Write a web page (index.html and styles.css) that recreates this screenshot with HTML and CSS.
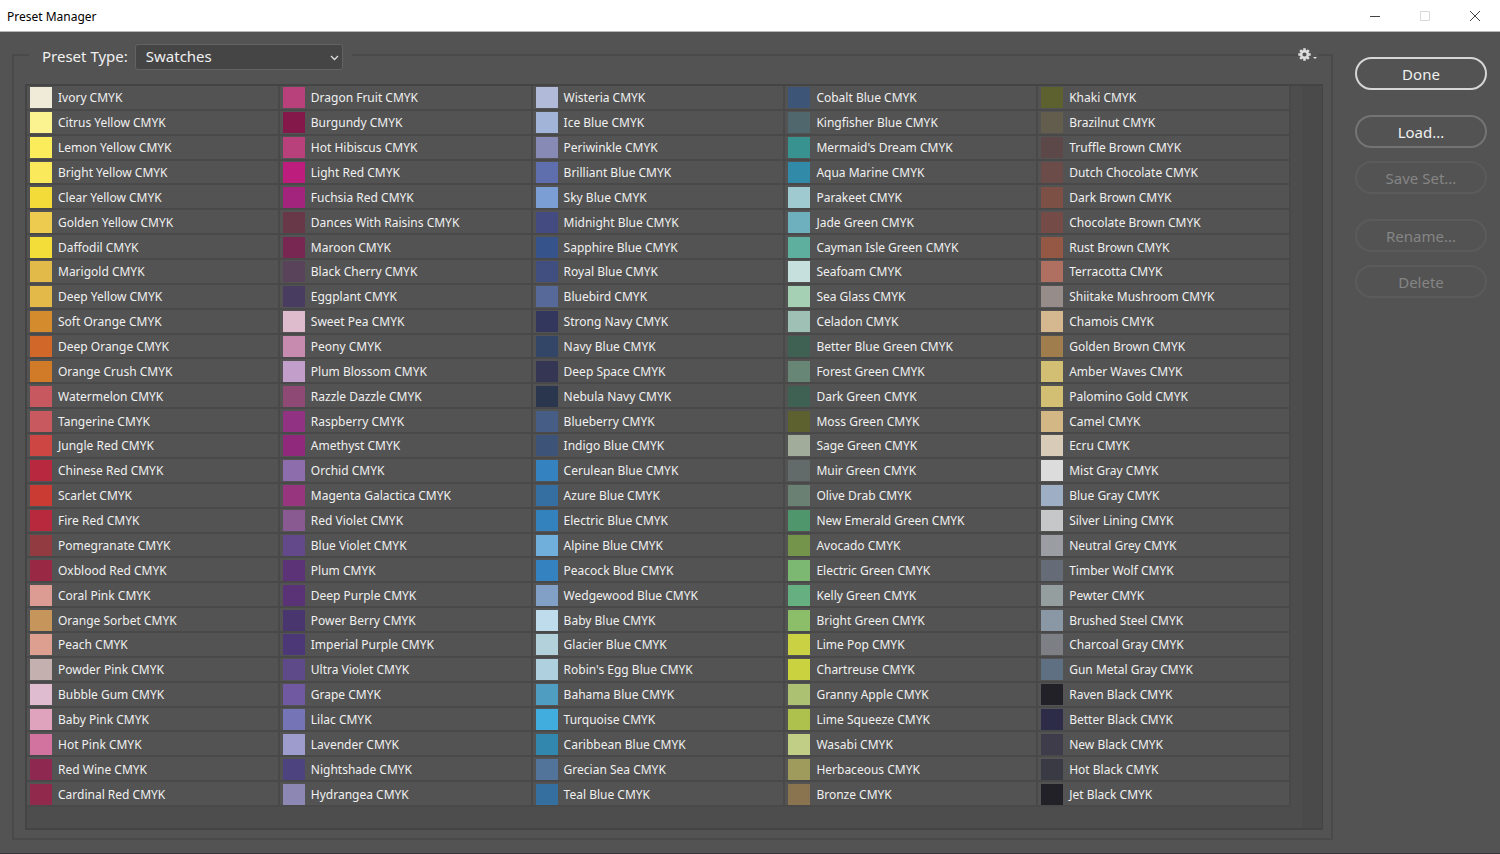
FILE: index.html
```html
<!DOCTYPE html>
<html lang="en">
<head>
<meta charset="utf-8">
<title>Preset Manager</title>
<link rel="stylesheet" href="styles.css">
</head>
<body>
<header class="titlebar">
  <h1 class="title">Preset Manager</h1>
  <div class="window-controls">
    <button class="win-btn" type="button" aria-label="Minimize"><svg width="12" height="12" viewBox="0 0 12 12"><path d="M1 6.500h10" stroke="#444"/></svg></button>
    <button class="win-btn" type="button" aria-label="Maximize" disabled><svg width="12" height="12" viewBox="0 0 12 12"><path d="M1.500 1.500h9v9h-9z" fill="none" stroke="#d8d8d8"/></svg></button>
    <button class="win-btn" type="button" aria-label="Close"><svg width="12" height="12" viewBox="0 0 12 12"><path d="M1 1l10 10M11 1L1 11" stroke="#444"/></svg></button>
  </div>
</header>
<main class="dialog">
  <section class="frame">
    <div class="type-row">
      <label for="type">Preset Type:</label>
      <span class="select-wrap">
        <select id="type"><option>Swatches</option></select>
        <svg class="chevron" width="9" height="6" viewBox="0 0 9 6"><path d="M1 1l3.500 3.500L8 1" fill="none" stroke="#e0e0e0" stroke-width="1.300"/></svg>
      </span>
    </div>
    <button class="gear" type="button" aria-label="Options"><svg width="20" height="14" viewBox="0 0 20 14"><g stroke="#dedede" stroke-width="2.600"><path d="M6.500 .3v12.400M.3 6.500h12.400M2.200 2.200l8.600 8.600M10.800 2.200l-8.600 8.600"/></g><circle cx="6.500" cy="6.500" r="3.300" fill="#535353" stroke="#dedede" stroke-width="2.400"/><path d="M15 9h4l-2 2z" fill="#dedede"/></svg></button>
    <div class="list">
      <ul class="grid" id="swatches"></ul>
      <div class="scroll-track"></div>
    </div>
  </section>
  <aside class="actions">
    <div class="group"><button class="action primary" type="button">Done</button></div>
    <div class="group"><button class="action" type="button">Load...</button><button class="action" type="button" disabled>Save Set...</button></div>
    <div class="group"><button class="action" type="button" disabled>Rename...</button><button class="action" type="button" disabled>Delete</button></div>
  </aside>
</main>
<script src="swatches.js"></script>
</body>
</html>
```
FILE: styles.css
```css
* { box-sizing: border-box; }
body {
  margin: 0;
  min-height: 100vh;
  display: flex;
  flex-direction: column;
  background: #535353;
  color: #f0f0f0;
  font-family: "Noto Sans", "Open Sans", sans-serif;
  font-size: 12px;
}
button, select { font: inherit; color: inherit; }
.titlebar {
  display: flex;
  justify-content: space-between;
  align-items: center;
  height: 32px;
  padding-left: 7px;
  background: #fff;
  border-bottom: 1px solid #b8b8b8;
  color: #000;
}
.title { margin: 0; padding-top: 1px; font-size: 12px; font-weight: 400; }
.window-controls { display: flex; }
.win-btn {
  width: 50px;
  height: 31px;
  padding: 0;
  border: 0;
  background: none;
  display: grid;
  place-items: center;
}
.dialog {
  flex: 1;
  display: flex;
  gap: 22px;
  padding: 22px 13px 13px 12px;
  border-bottom: 1px solid #383638;
}
.frame {
  position: relative;
  flex: 1;
  min-width: 0;
  display: flex;
  flex-direction: column;
  padding: 0 8px 8px 11px;
  border: 2px solid #4a4a4a;
}
.type-row {
  align-self: flex-start;
  display: flex;
  align-items: center;
  gap: 7px;
  margin: -12px 0 14px 4px;
  padding: 0 9px 0 13px;
  background: #535353;
  font-size: 15px;
  line-height: 20px;
}
.select-wrap { position: relative; display: flex; }
.select-wrap select {
  appearance: none;
  width: 208px;
  height: 26px;
  padding: 0 24px 2px 10px;
  border: 1px solid #626262;
  border-radius: 3px;
  background: #454545;
}
.type-row label { padding-bottom: 2px; }
.chevron { position: absolute; right: 4px; top: 11px; pointer-events: none; }
.gear {
  position: absolute;
  top: -8px;
  right: 13px;
  height: 14px;
  padding: 0;
  border: 0;
  background: #535353;
  display: flex;
}
.list {
  flex: 1;
  display: flex;
  background: #4d4d4d;
  border: 2px solid #444;
  border-right-width: 1px;
}
.grid {
  flex: 1;
  display: grid;
  grid-auto-flow: column;
  grid-template: repeat(29, 1fr) / repeat(5, 1fr);
  margin: 0 11px 21px 0;
  padding: 0;
  list-style: none;
}
.item {
  display: flex;
  align-items: center;
  gap: 6px;
  min-width: 0;
  height: 100%;
  padding: 1px 0 0 3px;
  background: #535353;
  border: solid #494949;
  border-width: 0 2px 2px 0;
  line-height: 21px;
  white-space: nowrap;
}
.chip { width: 22px; height: 21px; flex: none; }
.scroll-track { width: 20px; background: #4a4a4a; }
.actions {
  width: 132px;
  padding-top: 3px;
  display: flex;
  flex-direction: column;
  gap: 25px;
}
.group { display: flex; flex-direction: column; gap: 13px; }
.action {
  height: 33px;
  padding: 0;
  border: 2px solid #747474;
  border-radius: 17px;
  background: none;
  font-size: 15px;
  line-height: 20px;
}
.primary { border-color: #d6d6d6; }
.action:disabled { border-color: #5b5b5b; color: #858585; }
```
FILE: swatches.js
```js
const columns = [
  "Ivory f0ebd8|Citrus Yellow fbf38f|Lemon Yellow fbec5c|Bright Yellow faea5b|Clear Yellow f3dc3a|Golden Yellow edcb4f|Daffodil f3dd38|Marigold e2ba49|Deep Yellow e3ba49|Soft Orange d48b2e|Deep Orange d16729|Orange Crush d17a27|Watermelon c7585f|Tangerine c7595f|Jungle Red cd4643|Chinese Red b8283e|Scarlet c93b33|Fire Red b8293e|Pomegranate 923b40|Oxblood Red 992844|Coral Pink dc9c93|Orange Sorbet c6955c|Peach dd9f90|Powder Pink c5b0b0|Bubble Gum dfbccf|Baby Pink e0a3bd|Hot Pink d1729f|Red Wine 8e2850|Cardinal Red 91294c",
  "Dragon Fruit b8407b|Burgundy 84184b|Hot Hibiscus b8407b|Light Red bd1e7e|Fuchsia Red a3247c|Dances With Raisins 683848|Maroon 772752|Black Cherry 59435b|Eggplant 483d60|Sweet Pea dfbccd|Peony c78bb0|Plum Blossom c19fca|Razzle Dazzle 8f4975|Raspberry 913283|Amethyst 90297c|Orchid 8d6dab|Magenta Galactica 98357f|Red Violet 895991|Blue Violet 634989|Plum 5b3376|Deep Purple 593375|Power Berry 49366e|Imperial Purple 4c3877|Ultra Violet 5e4989|Grape 7059a1|Lilac 7474b7|Lavender 9d9ccd|Nightshade 4c437f|Hydrangea 8c87b3",
  "Wisteria b2bad9|Ice Blue a2b4d7|Periwinkle 878ab4|Brilliant Blue 5f6fad|Sky Blue 7b9fd5|Midnight Blue 434b80|Sapphire Blue 37538b|Royal Blue 404e80|Bluebird 566998|Strong Navy 33375d|Navy Blue 334668|Deep Space 353653|Nebula Navy 29364d|Blueberry 465e86|Indigo Blue 3d5378|Cerulean Blue 3582c0|Azure Blue 356fa2|Electric Blue 3482bd|Alpine Blue 70aedb|Peacock Blue 3582c0|Wedgewood Blue 829fc5|Baby Blue bedcec|Glacier Blue b2d1da|Robin's Egg Blue aed0df|Bahama Blue 4f9dc0|Turquoise 41addf|Caribbean Blue 3187ae|Grecian Sea 52749b|Teal Blue 356f9f",
  "Cobalt Blue 3d5577|Kingfisher Blue 50676d|Mermaid's Dream 379290|Aqua Marine 318aa8|Parakeet 9fcbd0|Jade Green 6eb0bd|Cayman Isle Green 5faf9f|Seafoam c6e1dd|Sea Glass a5d0b4|Celadon 9fc1b5|Better Blue Green 3f6154|Forest Green 678675|Dark Green 3f6153|Moss Green 5c612f|Sage Green a1ad9a|Muir Green 626b6a|Olive Drab 6a8072|New Emerald Green 50966c|Avocado 74944b|Electric Green 7db873|Kelly Green 66af80|Bright Green 8cbd68|Lime Pop cad244|Chartreuse cbd240|Granny Apple adc172|Lime Squeeze adc14c|Wasabi c1cf86|Herbaceous 9e9b5d|Bronze 8a734f",
  "Khaki 5c612f|Brazilnut 625d4c|Truffle Brown 5c4848|Dutch Chocolate 6c4c49|Dark Brown 7d5046|Chocolate Brown 744b47|Rust Brown 945844|Terracotta b07061|Shiitake Mushroom 968c8a|Chamois d5b88f|Golden Brown a07d4d|Amber Waves d3bf73|Palomino Gold d3bf73|Camel d3b785|Ecru d8cbb7|Mist Gray dbdcdb|Blue Gray 9eafc5|Silver Lining c6c7c9|Neutral Grey 9a9da2|Timber Wolf 656c78|Pewter 949e9f|Brushed Steel 8a98a6|Charcoal Gray 7c7f84|Gun Metal Gray 5e7082|Raven Black 222127|Better Black 2c2c49|New Black 3e3b4a|Hot Black 393a43|Jet Black 222127"
];

const list = document.getElementById("swatches");
for (const entry of columns.join("|").split("|")) {
  const cut = entry.lastIndexOf(" ");
  const item = document.createElement("li");
  item.className = "item";
  const chip = document.createElement("span");
  chip.className = "chip";
  chip.style.background = "#" + entry.slice(cut + 1);
  item.append(chip, entry.slice(0, cut) + " CMYK");
  list.append(item);
}
```
